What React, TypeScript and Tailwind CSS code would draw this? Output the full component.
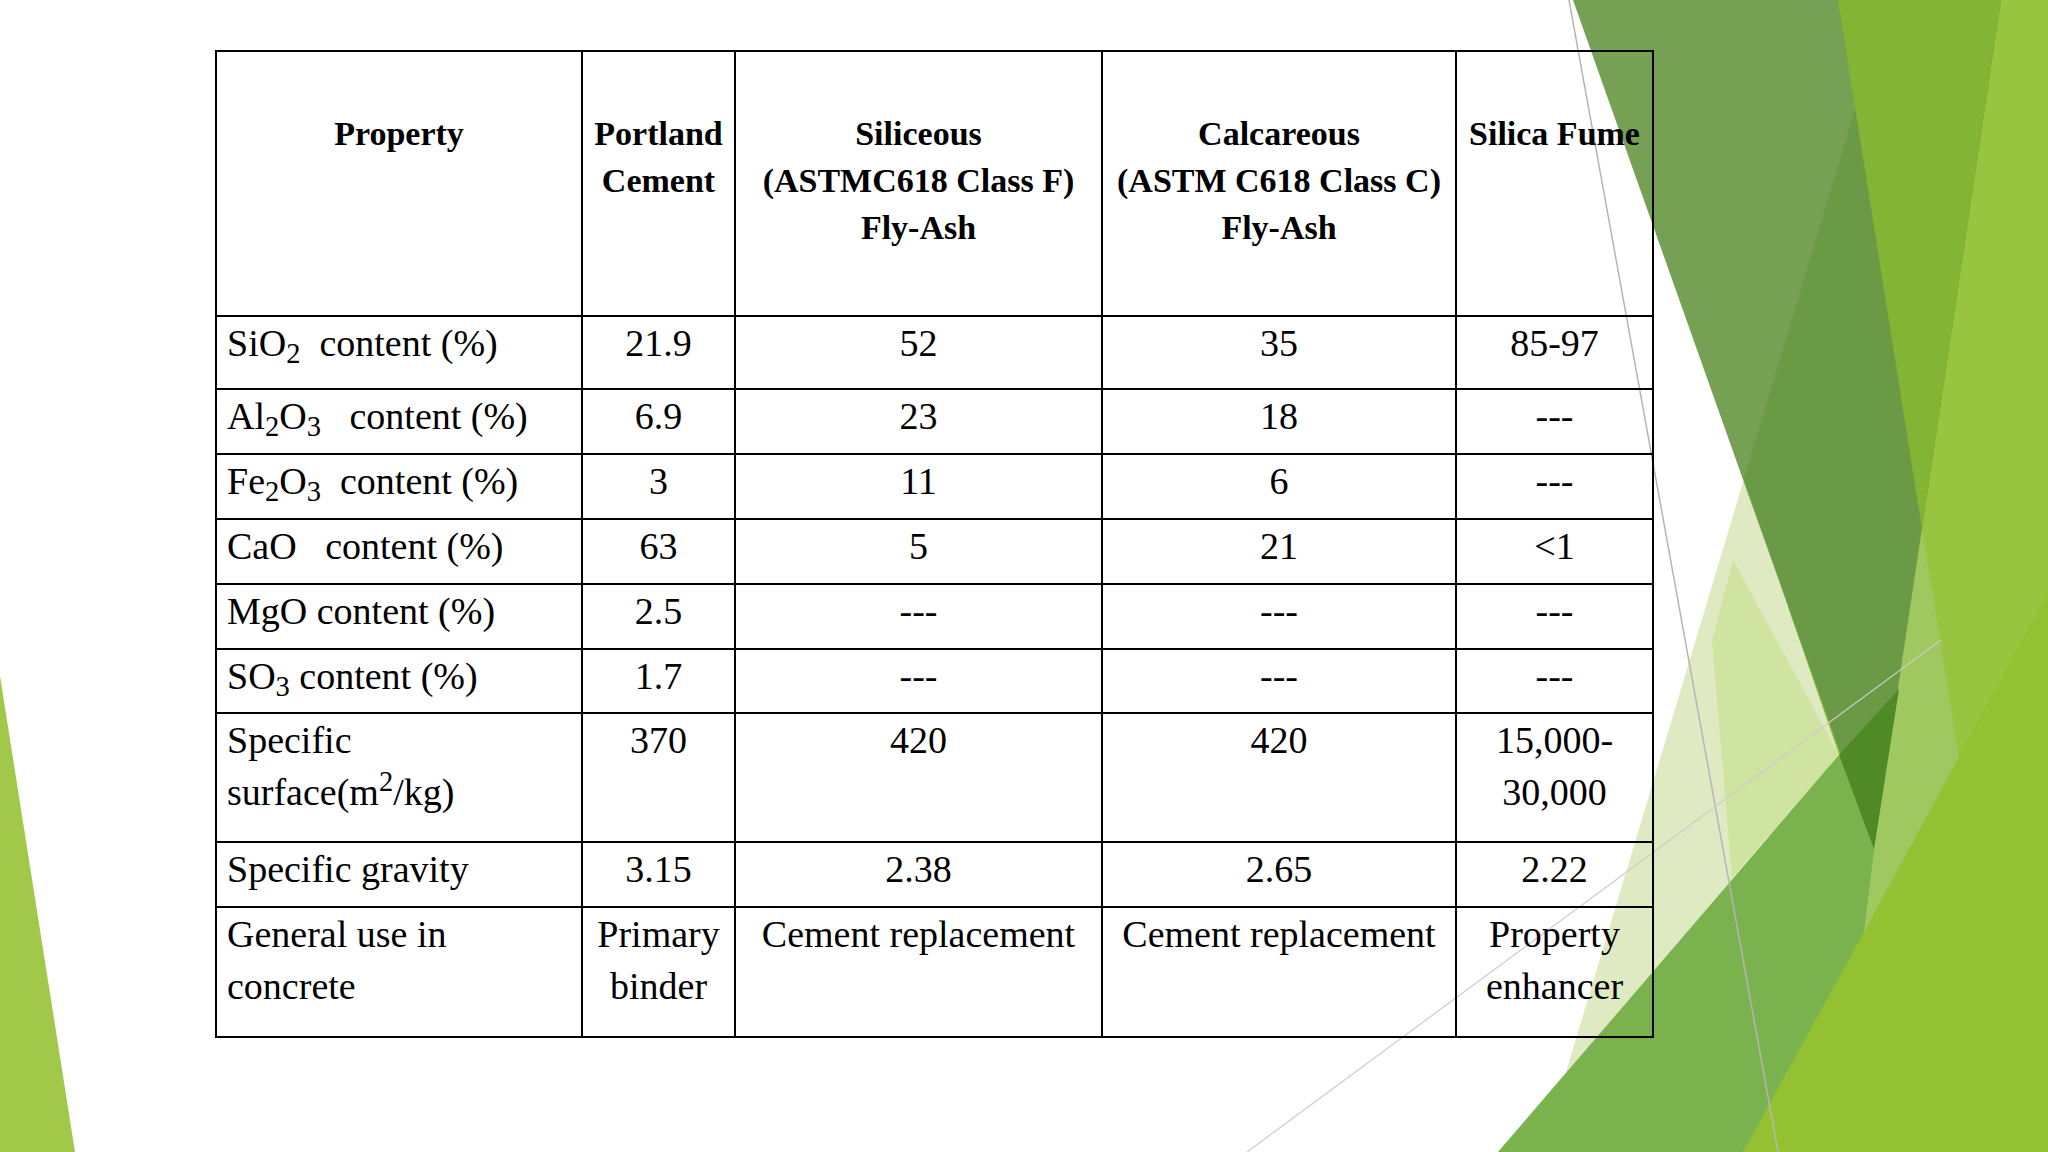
import React from "react";

type Cell = React.ReactNode;

const rows: { h: string; cells: Cell[] }[] = [
  {
    h: "h-[73px]",
    cells: [
      <span className="whitespace-pre">SiO<sub>2</sub>{"  content (%)"}</span>,
      "21.9",
      "52",
      "35",
      "85-97",
    ],
  },
  {
    h: "h-[65px]",
    cells: [
      <span className="whitespace-pre">Al<sub>2</sub>O<sub>3</sub>{"   content (%)"}</span>,
      "6.9",
      "23",
      "18",
      "---",
    ],
  },
  {
    h: "h-[65px]",
    cells: [
      <span className="whitespace-pre">Fe<sub>2</sub>O<sub>3</sub>{"  content (%)"}</span>,
      "3",
      "11",
      "6",
      "---",
    ],
  },
  {
    h: "h-[65px]",
    cells: [<span className="whitespace-pre">{"CaO   content (%)"}</span>, "63", "5", "21", "<1"],
  },
  {
    h: "h-[65px]",
    cells: ["MgO content (%)", "2.5", "---", "---", "---"],
  },
  {
    h: "h-[64px]",
    cells: [
      <span className="whitespace-pre">SO<sub>3</sub>{" content (%)"}</span>,
      "1.7",
      "---",
      "---",
      "---",
    ],
  },
  {
    h: "h-[129px]",
    cells: [
      <>
        Specific
        <br />
        surface(m<sup>2</sup>/kg)
      </>,
      "370",
      "420",
      "420",
      <>
        15,000-
        <br />
        30,000
      </>,
    ],
  },
  {
    h: "h-[65px]",
    cells: ["Specific gravity", "3.15", "2.38", "2.65", "2.22"],
  },
  {
    h: "h-[130px]",
    cells: [
      <>
        General use in
        <br />
        concrete
      </>,
      <>
        Primary
        <br />
        binder
      </>,
      "Cement replacement",
      "Cement replacement",
      <>
        Property
        <br />
        enhancer
      </>,
    ],
  },
];

const headers: Cell[] = [
  "Property",
  <>
    Portland
    <br />
    Cement
  </>,
  <>
    Siliceous
    <br />
    (ASTMC618 Class F)
    <br />
    Fly-Ash
  </>,
  <>
    Calcareous
    <br />
    (ASTM C618 Class C)
    <br />
    Fly-Ash
  </>,
  "Silica Fume",
];

function Backdrop() {
  return (
    <svg
      className="absolute inset-0"
      width="2048"
      height="1152"
      viewBox="0 0 2048 1152"
    >
      {/* left corner */}
      <polygon points="0,676 75,1152 0,1152" fill="#a2c84a" />

      {/* right facets */}
      <polygon points="1838,0 2048,0 2048,1152 1743,1152" fill="#98c43f" />
      <polygon points="1743,1152 2048,593 2048,1152" fill="#93c132" />
      <polygon points="1744,479 1839,755 1498,1152 1542,1152" fill="#dfeac3" />
      <polygon points="1733,560 1839,755 1732,878 1712,640" fill="#d0e4a2" />
      <polygon points="1573,0 2001,0 1874,849" fill="#76a053" />
      <polygon points="1888,0 2001,0 1874,849 1744,479" fill="#6a9a45" />
      <polygon points="1838,0 2001,0 1922,529" fill="#84b434" />
      <polygon points="1922,529 1959,757 1864,932 1874,849" fill="#a0c860" />
      <polygon points="1498,1152 1839,755 1874,849 1864,932 1743,1152" fill="#7ab34d" />
      <polygon points="1839,755 1899,689 1874,849" fill="#4f8a26" />

      {/* thin rules */}
      <line x1="1569" y1="0" x2="1778" y2="1152" stroke="#b5b5b5" strokeWidth="1.5" />
      <line x1="1247" y1="1152" x2="1941" y2="640" stroke="#cccccc" strokeWidth="1.2" />
    </svg>
  );
}

export default function App() {
  return (
    <div className="relative w-[2048px] h-[1152px] overflow-hidden bg-white text-black font-['Liberation_Serif','Times_New_Roman',serif]">
      <Backdrop />

      <div className="relative pl-[215px] pt-[50px]">
        <table className="table-fixed border-collapse w-[1437px]">
          <colgroup>
            <col className="w-[366px]" />
            <col className="w-[153px]" />
            <col className="w-[367px]" />
            <col className="w-[354px]" />
            <col className="w-[197px]" />
          </colgroup>
          <thead>
            <tr className="h-[265px]">
              {headers.map((h, i) => (
                <th
                  key={i}
                  className="border-2 border-black align-top text-center font-bold text-[34px] leading-[47px] pt-[58px] px-1 whitespace-nowrap"
                >
                  {h}
                </th>
              ))}
            </tr>
          </thead>
          <tbody>
            {rows.map((r, ri) => (
              <tr key={ri} className={r.h}>
                {r.cells.map((c, ci) => (
                  <td
                    key={ci}
                    className={
                      "border-2 border-black align-top text-[38px] leading-[52px] pt-0 whitespace-nowrap " +
                      (ci === 0 ? "text-left pl-[10px]" : "text-center px-1")
                    }
                  >
                    {c}
                  </td>
                ))}
              </tr>
            ))}
          </tbody>
        </table>
      </div>
    </div>
  );
}
